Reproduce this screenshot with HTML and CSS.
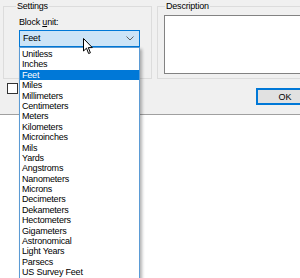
FILE: index.html
```html
<!DOCTYPE html>
<html lang="en">
<head>
    <meta charset="UTF-8">
    <title>Block Units</title>
    <link rel="stylesheet" href="styles.css">
</head>
<body>
    <div class="dialog">
        <div class="groups">
            <!-- Settings group with the unit combo -->
            <div class="group settings">
                <span class="group-title">Settings</span>
                <div class="field-label">Block <u>u</u>nit:</div>
                <div class="combo">
                    <span class="combo-value">Feet</span>
                    <svg class="chevron" width="8" height="5" viewBox="0 0 8 5">
                        <polyline points="0.5,0.5 4,4 7.5,0.5" fill="none" stroke="#606060" stroke-width="1"/>
                    </svg>

                    <!-- open dropdown list -->
                    <ul class="unit-list">
                        <li>Unitless</li>
                        <li>Inches</li>
                        <li class="selected">Feet</li>
                        <li>Miles</li>
                        <li>Millimeters</li>
                        <li>Centimeters</li>
                        <li>Meters</li>
                        <li>Kilometers</li>
                        <li>Microinches</li>
                        <li>Mils</li>
                        <li>Yards</li>
                        <li>Angstroms</li>
                        <li>Nanometers</li>
                        <li>Microns</li>
                        <li>Decimeters</li>
                        <li>Dekameters</li>
                        <li>Hectometers</li>
                        <li>Gigameters</li>
                        <li>Astronomical</li>
                        <li>Light Years</li>
                        <li>Parsecs</li>
                        <li>US Survey Feet</li>
                    </ul>

                    <!-- mouse pointer -->
                    <svg class="pointer" width="11" height="17" viewBox="0 0 11 17">
                        <path d="M0.5,0.5 L0.5,13 L3.5,10.2 L5.6,15.5 L7.4,14.8 L5.3,9.6 L9.3,9.6 Z" fill="#fff" stroke="#000" stroke-width="1" stroke-linejoin="round"/>
                    </svg>
                </div>
            </div>

            <!-- Description group -->
            <div class="group description">
                <span class="group-title">Description</span>
                <div class="desc-box"></div>
            </div>
        </div>

        <div class="bottom-row">
            <span class="checkbox"></span>
            <button class="ok-btn">OK</button>
        </div>
    </div>
</body>
</html>
```

FILE: styles.css
```css
body {
    margin: 0;
    background: #fff;
    font-family: "Liberation Sans", Arial, sans-serif;
    font-size: 9px;
    letter-spacing: -0.2px;
    color: #000;
    overflow: hidden;
    width: 300px;
    height: 278px;
}

/* dialog surface */
.dialog {
    width: 313px;
    height: 114px;
    padding: 0 4px 0 3px;
    background: #f0f0f0;
    border-bottom: 1px solid #a0a0a0;
}

.groups {
    display: flex;
    gap: 5px;
    padding-top: 6px;
}

/* etched group box */
.group {
    box-sizing: border-box;
    height: 73px;
    border: 1px solid #dcdcdc;
    line-height: 11px;
}

.group-title {
    display: table;
    margin-top: -6px;
    padding: 0 1px;
    background: #f0f0f0;
}

.settings {
    width: 149px;
    padding-left: 15px;
}

.settings .group-title {
    margin-left: -3px;
}

.description {
    flex: 1;
}

.description .group-title {
    margin-left: 7px;
}

.field-label {
    margin-top: 5px;
}

/* combo box */
.combo {
    position: relative;
    box-sizing: border-box;
    width: 121px;
    height: 17px;
    margin-top: 2px;
    padding-left: 3px;
    background: #cce4f7;
    border: 1px solid #0078d7;
    display: flex;
    align-items: center;
    justify-content: space-between;
}

.chevron {
    margin-right: 5px;
}

.unit-list {
    position: absolute;
    top: 16px;
    left: -1px;
    width: 121px;
    box-sizing: border-box;
    margin: 0;
    padding: 1px 0 0;
    list-style: none;
    background: #fff;
    border: 1px solid #5b9bd5;
    box-shadow: 2px 2px 3px rgba(0, 0, 0, 0.3);
    z-index: 2;
}

.unit-list li {
    height: 10.4px;
    line-height: 10.4px;
    padding-left: 2px;
    white-space: nowrap;
}

.unit-list .selected {
    background: #0078d7;
    color: #fff;
}

.pointer {
    position: absolute;
    left: 63px;
    top: 7px;
    z-index: 3;
}

.desc-box {
    margin: 3px 0 0 6px;
    height: 57px;
    background: #fff;
    border: 1px solid #828282;
}

/* checkbox + OK */
.bottom-row {
    display: flex;
    justify-content: space-between;
    align-items: flex-start;
    margin-top: 4px;
    padding-left: 4px;
}

.checkbox {
    width: 9px;
    height: 9px;
    background: #fff;
    border: 1px solid #333;
}

.ok-btn {
    margin-top: 5px;
    margin-right: 2px;
    width: 58px;
    height: 17px;
    padding: 0;
    background: #e1e1e1;
    border: 2px solid #0078d7;
    font: inherit;
    letter-spacing: 0;
    color: #000;
}
```
